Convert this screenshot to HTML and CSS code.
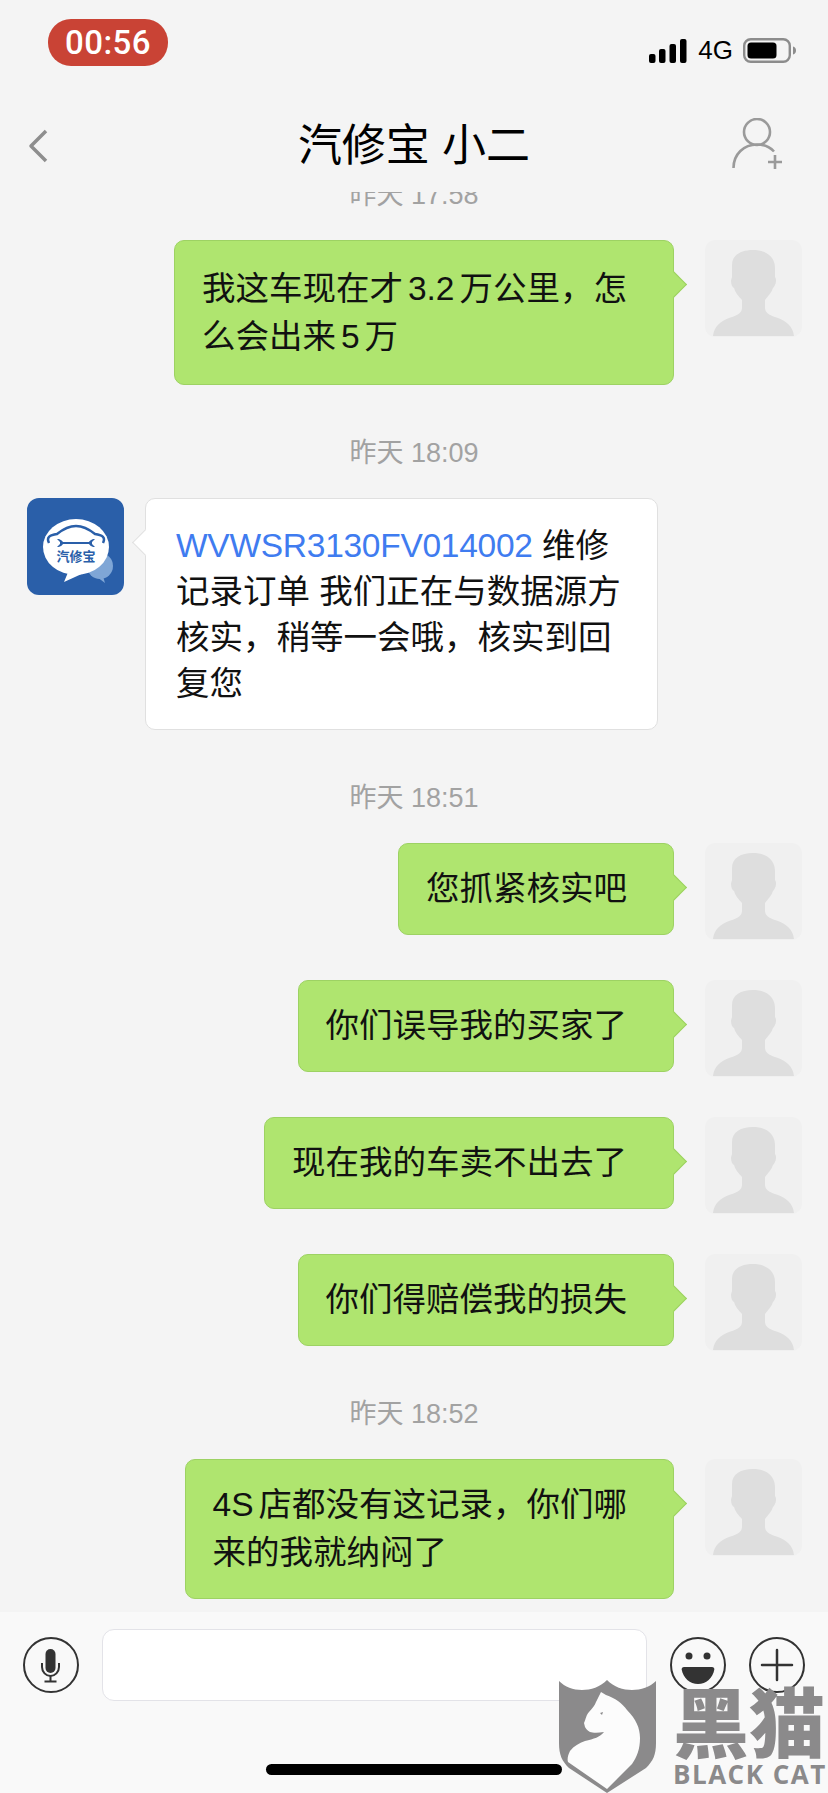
FILE: index.html
```html
<!DOCTYPE html>
<html lang="zh-CN">
<head>
    <meta charset="UTF-8">
    <title>汽修宝 小二</title>
    <link rel="stylesheet" href="styles.css">
</head>
<body>
<div class="phone">
    <div class="status">
        <div class="timer">00:56</div>
        <div class="status-right">
            <svg class="signal" width="38" height="24" viewBox="0 0 38 24">
                <rect x="0" y="15" width="6.500" height="9" rx="2"/>
                <rect x="10" y="10" width="6.500" height="14" rx="2"/>
                <rect x="20.500" y="5" width="6.500" height="19" rx="2"/>
                <rect x="31" y="0" width="6.500" height="24" rx="2"/>
            </svg>
            <span class="net">4G</span>
            <svg class="battery" width="53" height="25" viewBox="0 0 53 25">
                <rect x="1.200" y="1.200" width="45.600" height="22.600" rx="6.500" fill="none" stroke="#8c8c8c" stroke-width="2.400"/>
                <rect x="4.500" y="4.500" width="29" height="16" rx="3.500" fill="#000"/>
                <path d="M50 8.500c2 .4 3 2 3 4s-1 3.600-3 4z" fill="#8c8c8c"/>
            </svg>
        </div>
    </div>

    <div class="nav">
        <svg class="back" width="20" height="34" viewBox="0 0 20 34">
            <path d="M18 2 3 17l15 15" fill="none" stroke="#8e8e8e" stroke-width="3.500" stroke-linejoin="round"/>
        </svg>
        <div class="title">汽修宝 小二</div>
        <svg class="person" width="50" height="52" viewBox="0 0 50 52" fill="none" stroke="#9a9a9a" stroke-width="2.600">
            <circle cx="25" cy="14" r="13"/>
            <path d="M1.500 50C1.500 36 12 26.500 25 26.500c7 0 13 2.500 17 7"/>
            <path d="M43 37v14M36 44h14"/>
        </svg>
    </div>

    <div class="chat">
        <div class="time">昨天 17:58</div>

        <div class="msg msg-me">
            <div class="bubble bubble-first">我这车现在才<span class="num">3.2</span>万公里，怎<br>么会出来<span class="num">5</span>万</div>
            <svg class="avatar" viewBox="0 0 97 97"><use href="#blank-user"/></svg>
        </div>

        <div class="time">昨天 18:09</div>

        <div class="msg msg-other">
            <svg class="avatar logo" viewBox="0 0 97 97">
                <rect width="97" height="97" rx="12" fill="#2a5fa9"/>
                <circle cx="73" cy="68" r="13" fill="#7fa6d6"/>
                <path d="M66 76l12 9-3-10z" fill="#7fa6d6"/>
                <ellipse cx="49" cy="49" rx="33" ry="28" fill="#fff"/>
                <path d="M42 72 37 84 59 74z" fill="#fff"/>
                <path d="M22 45c-3-6 1-8 8-9 5-4 11-8 19-8s14 4 19 8c7 1 11 3 8 9" fill="none" stroke="#2a5fa9" stroke-width="2.500"/>
                <path d="M30 41c4 0 5 2 6 3h26c1-1 2-3 6-3l-3 3v2l3 3c-4 0-5-2-6-3H36c-1 1-2 3-6 3l3-3v-2z" fill="#2a5fa9"/>
                <text class="logo-text" x="49" y="63" text-anchor="middle">汽修宝</text>
            </svg>
            <div class="bubble bubble-long"><span class="vin">WVWSR3130FV014002</span> 维修<br>记录订单 我们正在与数据源方<br>核实，稍等一会哦，核实到回<br>复您</div>
        </div>

        <div class="time">昨天 18:51</div>

        <div class="msg msg-me">
            <div class="bubble">您抓紧核实吧</div>
            <svg class="avatar" viewBox="0 0 97 97"><use href="#blank-user"/></svg>
        </div>
        <div class="msg msg-me">
            <div class="bubble">你们误导我的买家了</div>
            <svg class="avatar" viewBox="0 0 97 97"><use href="#blank-user"/></svg>
        </div>
        <div class="msg msg-me">
            <div class="bubble">现在我的车卖不出去了</div>
            <svg class="avatar" viewBox="0 0 97 97"><use href="#blank-user"/></svg>
        </div>
        <div class="msg msg-me">
            <div class="bubble">你们得赔偿我的损失</div>
            <svg class="avatar" viewBox="0 0 97 97"><use href="#blank-user"/></svg>
        </div>

        <div class="time">昨天 18:52</div>

        <div class="msg msg-me">
            <div class="bubble">4S<span class="num-end"></span>店都没有这记录，你们哪<br>来的我就纳闷了</div>
            <svg class="avatar" viewBox="0 0 97 97"><use href="#blank-user"/></svg>
        </div>
    </div>

    <div class="toolbar">
        <div class="toolbar-row">
            <svg class="tool" viewBox="0 0 56 56" fill="none" stroke="#333" stroke-width="2">
                <circle cx="28" cy="28" r="27"/>
                <rect x="22.500" y="12" width="10" height="24" rx="5" fill="#333" stroke="none"/>
                <path d="M19 26v4c0 5 4 9 8.500 9s8.500-4 8.500-9v-4M27.500 39v5M21.500 44.500h12"/>
            </svg>
            <div class="input"></div>
            <svg class="tool" viewBox="0 0 56 56" fill="none" stroke="#333" stroke-width="2">
                <circle cx="28" cy="28" r="27"/>
                <circle cx="19" cy="19" r="3.500" fill="#333" stroke="none"/>
                <circle cx="37" cy="19" r="3.500" fill="#333" stroke="none"/>
                <path d="M14 30h28c1.500 0 2.500 1 2.300 2.500C43 41 36 47 28 47s-15-6-16.300-14.500C11.500 31 12.500 30 14 30z" fill="#333" stroke="none"/>
            </svg>
            <svg class="tool" viewBox="0 0 56 56" fill="none" stroke="#333" stroke-width="2">
                <circle cx="28" cy="28" r="27"/>
                <path d="M28 13v30M13 28h30" stroke-width="2.500" stroke-linecap="round"/>
            </svg>
        </div>
        <div class="home-bar"></div>
    </div>

    <div class="watermark">
        <svg class="shield" width="97" height="113" viewBox="0 0 97 113">
            <path d="M0 1c6 6 14 9 23 9s18-3 25-10c7 7 16 10 25 10s18-3 24-9v62c0 12-3 18-10 25L48 113 10 88C3 81 0 75 0 63z" fill="#8b8a8b"/>
            <path d="M42 12l5 3c9 3 16 8 21 15 9 9 13 18 13 28 0 11-3 19-8 26l-25 25-39-27c-1-3 0-7 2-11 4-5 9-8 15-10 9-2 15-4 19-9-6 1-11 1-14 0-3-2-4-3-5-5l-1-4c2-4 2-8 5-11 3-3 6-7 7-10z" fill="#fcfcfc"/>
            <path d="M41 33l3-1-1 3z" fill="#8b8a8b"/>
        </svg>
        <div class="brand">
            <div class="brand-cn">黑猫</div>
            <div class="brand-en">BLACK CAT</div>
        </div>
    </div>
</div>

<svg class="defs" width="0" height="0">
    <symbol id="blank-user" viewBox="0 0 97 97">
        <rect width="97" height="97" rx="10" fill="#f0f0f0"/>
        <path d="M8 96C9 86 16 81 24 78c6-2 13-4 13-10v-8c-4-4-7-8-8-12-2-1-3-4-3-7 0-2 1-3 1-4V25C27 15 36 10 48 10s22 6 22 18v9c1 1 1 3 1 4 0 3-2 6-3 7-1 4-5 8-8 12v8c0 6 7 8 13 10 8 3 15 8 16 18z" fill="#dedede"/>
    </symbol>
</svg>
</body>
</html>
```

FILE: styles.css
```css
* {
    box-sizing: border-box;
}
html, body {
    margin: 0;
    padding: 0;
}
body {
    font-family: "Liberation Sans", "Noto Sans CJK SC", sans-serif;
    color: #111;
    background: #f4f4f4;
}
.defs {
    position: absolute;
}
.phone {
    position: relative;
    display: flex;
    flex-direction: column;
    width: 828px;
    height: 1793px;
    overflow: hidden;
    background: #f4f4f4;
}

/* status bar */
.status {
    display: flex;
    justify-content: space-between;
    align-items: flex-start;
    height: 47px;
    margin-top: 19px;
    padding: 0 32px 0 48px;
    flex-shrink: 0;
}
.timer {
    width: 120px;
    height: 47px;
    border-radius: 23px;
    background: #c94335;
    color: #fff;
    font-family: Roboto, sans-serif;
    font-size: 33px;
    font-weight: 500;
    line-height: 47px;
    text-align: center;
    letter-spacing: .5px;
}
.status-right {
    display: flex;
    align-items: center;
    margin-top: 19px;
}
.net {
    margin: 0 10px 0 11px;
    font-size: 26px;
    line-height: 25px;
    color: #000;
}

/* title bar */
.nav {
    display: grid;
    grid-template-columns: 1fr auto 1fr;
    align-items: center;
    height: 56px;
    margin-top: 52px;
    margin-bottom: 18px;
    padding: 0 46px;
    flex-shrink: 0;
}
.back {
    justify-self: start;
    margin-left: -18px;
}
.person {
    justify-self: end;
    align-self: start;
}
.title {
    font-size: 44px;
    line-height: 56px;
    color: #000;
}

/* messages */
.chat {
    flex: 1;
    min-height: 0;
    display: flex;
    flex-direction: column;
    justify-content: flex-end;
    overflow: hidden;
}
.time {
    flex-shrink: 0;
    margin: 8px 0 30px;
    font-size: 27px;
    line-height: 30px;
    text-align: center;
    color: #a2a2a2;
}
.msg {
    display: flex;
    align-items: flex-start;
    flex-shrink: 0;
    margin-bottom: 45px;
    padding: 0 26px 0 27px;
}
.msg:last-child {
    margin-bottom: 13px;
}
.msg-me {
    justify-content: flex-end;
    gap: 31px;
}
.msg-other {
    gap: 21px;
}
.avatar {
    display: block;
    width: 97px;
    height: 97px;
    margin-bottom: -5px;
    flex-shrink: 0;
}
.bubble {
    position: relative;
    padding: 21px 46px 21px 27px;
    border-radius: 10px;
    border: 1px solid #9dd263;
    background: #afe56f;
    font-size: 33.500px;
    line-height: 48px;
    color: #111;
}
.bubble-first {
    padding-top: 23.500px;
    padding-bottom: 23.500px;
}
.num {
    margin: 0 5px;
}
.num-end {
    margin-right: 5px;
}
.bubble::after {
    content: "";
    position: absolute;
    top: 34px;
    width: 18px;
    height: 18px;
    background: inherit;
    transform: rotate(45deg);
}
.msg-me .bubble::after {
    right: -10px;
    border-top: 1px solid #9dd263;
    border-right: 1px solid #9dd263;
}
.msg-other .bubble {
    padding: 24px 36px 22px 30px;
    background: #fff;
    border-color: #e0e0e0;
}
.msg-other .bubble::after {
    left: -10px;
    border-bottom: 1px solid #e0e0e0;
    border-left: 1px solid #e0e0e0;
}
.bubble-long {
    line-height: 46px;
}
.vin {
    color: #3f7cf0;
    letter-spacing: -.27px;
}
.logo-text {
    font-size: 13px;
    font-weight: 700;
    fill: #2a5fa9;
}

/* bottom input bar */
.toolbar {
    flex-shrink: 0;
    height: 181px;
    padding-top: 17px;
    background: #f9f9f9;
}
.toolbar-row {
    display: flex;
    align-items: center;
    gap: 23px;
    padding: 0 23px;
}
.tool {
    display: block;
    width: 56px;
    height: 56px;
    flex-shrink: 0;
}
.input {
    flex: 1;
    height: 72px;
    border: 1px solid #e3e3e8;
    border-radius: 12px;
    background: #fff;
}
.home-bar {
    width: 296px;
    height: 11px;
    margin: 63px auto 0;
    border-radius: 6px;
    background: #000;
}

/* watermark over the bar */
.watermark {
    position: absolute;
    left: 559px;
    top: 1680px;
    display: flex;
    gap: 17px;
    pointer-events: none;
}
.shield {
    display: block;
}
.brand {
    display: flex;
    flex-direction: column;
    width: 152px;
    color: #8b8a8b;
}
.brand-cn {
    margin-top: 3px;
    font-family: "Noto Sans CJK SC", sans-serif;
    font-size: 76px;
    font-weight: 900;
    line-height: 72px;
    white-space: nowrap;
}
.brand-en {
    margin-top: 6px;
    font-family: "Open Sans", sans-serif;
    font-size: 26px;
    font-weight: 700;
    line-height: 26px;
    letter-spacing: 1.500px;
    white-space: nowrap;
}
```
